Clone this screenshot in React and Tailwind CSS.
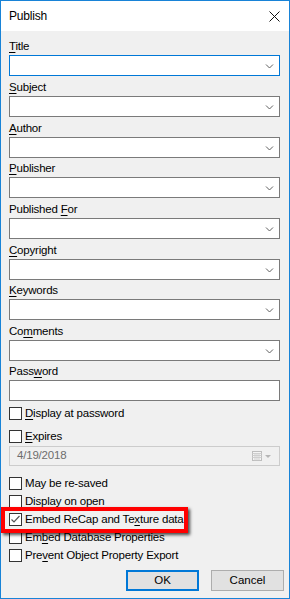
import React from "react";

const fields = [
  { pre: "", key: "T", post: "itle", mt: "mt-0", focus: true },
  { pre: "", key: "S", post: "ubject", mt: "mt-[3px]" },
  { pre: "", key: "A", post: "uthor", mt: "mt-[3px]" },
  { pre: "", key: "P", post: "ublisher", mt: "mt-[2px]" },
  { pre: "Published ", key: "F", post: "or", mt: "mt-[3px]" },
  { pre: "", key: "C", post: "opyright", mt: "mt-[3px]" },
  { pre: "", key: "K", post: "eywords", mt: "mt-[2px]" },
  { pre: "Co", key: "m", post: "ments", mt: "mt-[3px]" },
];

const Chevron = () => (
  <svg width="9" height="6" viewBox="0 0 9 6" className="mr-[5px]">
    <path d="M1 1.5 L4.5 5 L8 1.5" fill="none" stroke="#606060" strokeWidth="1" />
  </svg>
);

const Label = ({ pre, k, post }) => (
  <span>
    {pre}
    <span className="underline underline-offset-2">{k}</span>
    {post}
  </span>
);

const Checkbox = ({ checked }) => (
  <div className="w-[13px] h-[13px] bg-white border border-[#333333] flex items-center justify-center shrink-0">
    {checked && (
      <svg width="11" height="11" viewBox="0 0 11 11">
        <path d="M1.5 5.5 L4 8 L9.5 2" fill="none" stroke="#555555" strokeWidth="1.2" />
      </svg>
    )}
  </div>
);

const CheckRow = ({ children, checked, className = "" }) => (
  <div className={`flex items-center gap-[3px] h-[13px] ${className}`}>
    <Checkbox checked={checked} />
    <span className="leading-[13px]">{children}</span>
  </div>
);

export default function App() {
  return (
    <div
      className="relative w-[290px] h-[599px] border border-[#1883d7] bg-[#f0f0f0] flex flex-col text-[11.5px] tracking-[-0.2px] text-black"
      style={{ fontFamily: '"Liberation Sans", Arial, sans-serif' }}
    >
      <div className="h-[30px] bg-white flex items-center justify-between pl-[8px] pr-[9px] shrink-0">
        <span className="text-[12px]">Publish</span>
        <svg width="11" height="11" viewBox="0 0 11 11">
          <path d="M0.5 0.5 L10.5 10.5 M10.5 0.5 L0.5 10.5" stroke="#111111" strokeWidth="1" />
        </svg>
      </div>

      <div className="flex-1 flex flex-col pl-[8px] pr-[9px] pt-[7px]">
        {fields.map((f, i) => (
          <div key={i} className={f.mt}>
            <div className="h-[15px] leading-[16px] mb-[2px]">
              <Label pre={f.pre} k={f.key} post={f.post} />
            </div>
            <div
              className={`h-[21px] bg-white border flex items-center justify-end ${
                f.focus ? "border-[#0078d7]" : "border-[#7a7a7a]"
              }`}
            >
              <Chevron />
            </div>
          </div>
        ))}

        <div className="mt-[2px]">
          <div className="h-[15px] leading-[16px] mb-[2px]">
            <Label pre="Pass" k="w" post="ord" />
          </div>
          <div className="h-[21px] bg-white border border-[#7a7a7a]" />
        </div>

        <CheckRow className="mt-[6px]">
          <Label pre="" k="D" post="isplay at password" />
        </CheckRow>
        <CheckRow className="mt-[10px]">
          <Label pre="" k="E" post="xpires" />
        </CheckRow>

        <div className="mt-[3px] h-[20px] border border-[#cccccc] bg-[#f0f0f0] flex items-center justify-between pl-[7px] pr-[8px]">
          <span className="text-[#6d6d6d]">4/19/2018</span>
          <div className="flex items-center gap-[3px]">
            <svg width="10" height="10" viewBox="0 0 10 10">
              <rect x="0.5" y="0.5" width="9" height="9" fill="#f4f4f4" stroke="#bdbdbd" />
              <path d="M0.5 2.5 H9.5 M0.5 4.5 H9.5 M0.5 6.5 H9.5 M3 2.5 V9.5 M5 2.5 V9.5 M7 2.5 V9.5" stroke="#cfcfcf" strokeWidth="1" />
            </svg>
            <svg width="6" height="3" viewBox="0 0 6 3">
              <path d="M0 0 H6 L3 3 Z" fill="#b5b5b5" />
            </svg>
          </div>
        </div>

        <CheckRow className="mt-[11px]">May be re-saved</CheckRow>
        <CheckRow className="mt-[5px]">Display on open</CheckRow>
        <CheckRow className="mt-[5px]" checked>
          <Label pre="Embed ReCap and Te" k="x" post="ture data" />
        </CheckRow>
        <CheckRow className="mt-[5px]">
          <Label pre="Em" k="b" post="ed Database Properties" />
        </CheckRow>
        <CheckRow className="mt-[5px]">
          <Label pre="Pre" k="v" post="ent Object Property Export" />
        </CheckRow>

        <div className="mt-[8px] flex justify-end gap-[12px] mr-[-4px] tracking-normal">
          <button className="w-[73px] h-[21px] bg-[#e1e1e1] border-2 border-[#0078d7] flex items-center justify-center">
            OK
          </button>
          <button className="w-[73px] h-[21px] bg-[#e1e1e1] border border-[#adadad] flex items-center justify-center">
            Cancel
          </button>
        </div>
      </div>

      <div className="absolute left-0 top-[506px] w-[187px] h-[26px] border-[4px] border-[#ff0000] shadow-[2px_2px_3px_rgba(0,0,0,0.7)]" />
    </div>
  );
}
